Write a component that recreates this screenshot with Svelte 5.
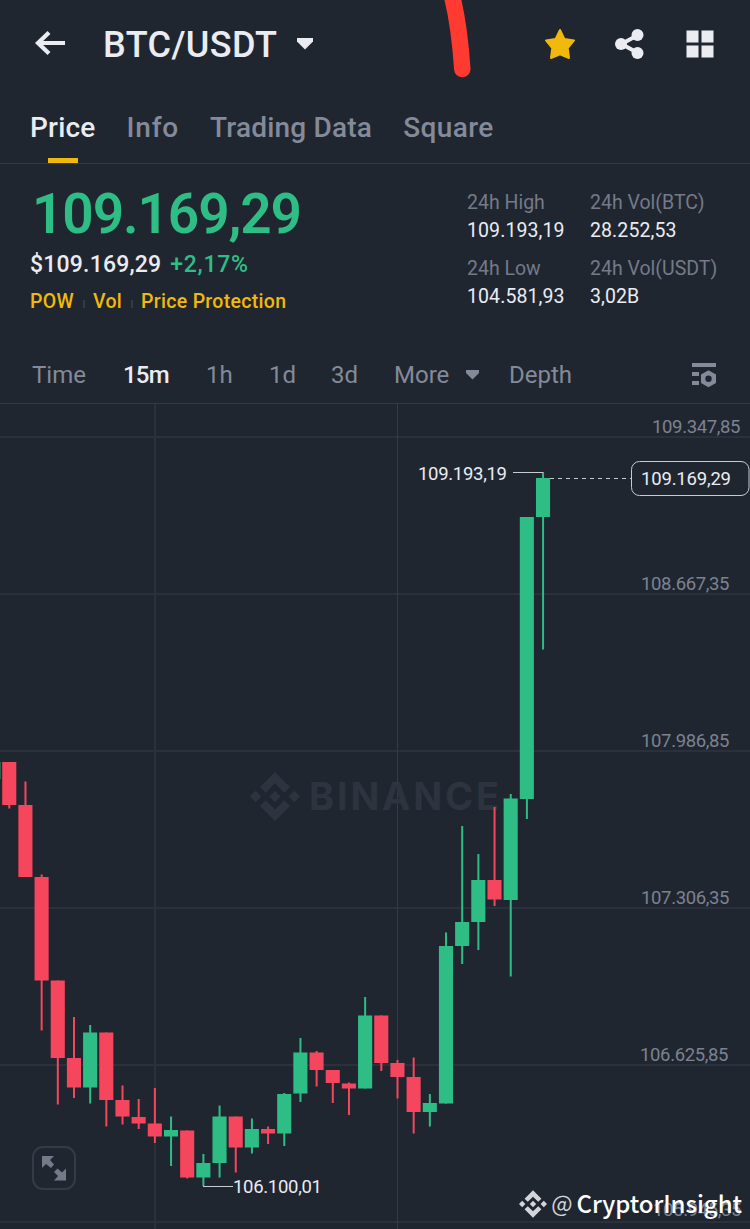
<script lang="ts">
    interface Candle {
        up: boolean;
        top: number;
        bottom: number;
        high: number;
        low: number;
    }

    const tabs = ['Price', 'Info', 'Trading Data', 'Square'];
    const tags = ['POW', 'Vol', 'Price Protection'];
    const stats = [
        {label: '24h High', value: '109.193,19'},
        {label: '24h Vol(BTC)', value: '28.252,53'},
        {label: '24h Low', value: '104.581,93'},
        {label: '24h Vol(USDT)', value: '3,02B'}
    ];

    const gridLines = [33, 190, 347, 504, 661, 818];
    const priceLabels = [
        {text: '109.347,85', x: 652, y: 30},
        {text: '108.667,35', x: 641, y: 187},
        {text: '107.986,85', x: 641, y: 344},
        {text: '107.306,35', x: 641, y: 501},
        {text: '106.625,85', x: 640, y: 658},
        {text: '105.945,35', x: 653, y: 813}
    ];

    const step = 16.175;
    // direction, body top, body bottom, wick top, wick bottom
    const rows: [string, number, number, number, number][] = [
        ['r', 762, 805, 762, 808.5],
        ['r', 805, 877, 781.5, 877],
        ['r', 877, 980.5, 874.5, 1030.5],
        ['r', 980.5, 1058, 980.5, 1104.5],
        ['r', 1058, 1087.5, 1017, 1098],
        ['g', 1032.5, 1087.5, 1025, 1103.5],
        ['r', 1032.5, 1100, 1032.5, 1126.5],
        ['r', 1100, 1116.5, 1085.5, 1124.5],
        ['r', 1117, 1123.5, 1099, 1129],
        ['r', 1123.5, 1136.5, 1088, 1143],
        ['g', 1130, 1136.5, 1116.5, 1166],
        ['r', 1130.5, 1177.5, 1130.5, 1178.5],
        ['g', 1163, 1177.5, 1154, 1186],
        ['g', 1116.5, 1163, 1105.5, 1177.5],
        ['r', 1116.5, 1147.5, 1116.5, 1172.5],
        ['g', 1129, 1147.5, 1118.5, 1153.5],
        ['r', 1129, 1133.5, 1126.5, 1144],
        ['g', 1094, 1133.5, 1093, 1146],
        ['g', 1052.5, 1093.5, 1038, 1102],
        ['r', 1052.5, 1070, 1051, 1086.5],
        ['r', 1070, 1083, 1070, 1103],
        ['r', 1083.5, 1088.5, 1082.5, 1115],
        ['g', 1015.5, 1088.5, 997, 1088.5],
        ['r', 1015.5, 1063, 1015.5, 1071],
        ['r', 1063, 1077, 1060, 1098.5],
        ['r', 1077, 1112, 1057.5, 1133.5],
        ['g', 1103, 1112, 1094, 1126.5],
        ['g', 946, 1103.5, 932.5, 1103.5],
        ['g', 922, 946, 826, 964],
        ['g', 880, 922, 854, 950],
        ['r', 880, 899.5, 807, 906],
        ['g', 798.5, 900, 794, 976.5],
        ['g', 517, 799, 517, 819],
        ['g', 478, 517, 472, 649.5]
    ];
    const candles: Candle[] = rows.map(([dir, top, bottom, high, low]) => ({up: dir === 'g', top, bottom, high, low}));
</script>

{#snippet logo()}
    <path d="M0-24.5 15-9.5 9.3-3.8 0-13-9.3-3.8-15-9.5Z"/>
    <path d="M0 24.5 15 9.5 9.3 3.8 0 13-9.3 3.8-15 9.5Z"/>
    <path d="M0-5.7 5.7 0 0 5.7-5.7 0ZM-19.3-5.7-13.6 0-19.3 5.7-25 0ZM19.3-5.7 25 0 19.3 5.7 13.6 0Z"/>
{/snippet}

<div class="screen">
    <header>
        <svg class="back" width="32" height="26" viewBox="0 0 32 26">
            <path d="M31 13H4M15 2.5 4 13 15 23.5" fill="none" stroke="currentColor" stroke-width="4.2"/>
        </svg>
        <h1>BTC/USDT</h1>
        <svg class="caret" width="16" height="12" viewBox="0 0 16 12">
            <path d="M0 0H16V3.5L8 11.5 0 3.5Z" fill="currentColor"/>
        </svg>
        <div class="actions">
            <svg width="32" height="32" viewBox="0 0 32 32">
                <path d="M16 2 20.3 10.9 30 12.4 23.7 20 25 30 16 26.4 7 30 8.3 20 2 12.4 11.7 10.9Z"
                      fill="#f0b90b" stroke="#f0b90b" stroke-width="2" stroke-linejoin="round"/>
            </svg>
            <svg width="32" height="32" viewBox="0 0 32 32">
                <path d="M24 7 7.5 16 24 25" fill="none" stroke="currentColor" stroke-width="4"/>
                <g fill="currentColor">
                    <circle cx="7" cy="16" r="6"/>
                    <circle cx="23.5" cy="7" r="6"/>
                    <circle cx="23.5" cy="25" r="6"/>
                </g>
            </svg>
            <svg width="32" height="32" viewBox="0 0 32 32">
                <path d="M2.5 2.5H14.5V14.5H2.5ZM17.5 2.5H29.5V14.5H17.5ZM2.5 17.5H14.5V29.5H2.5ZM17.5 17.5H29.5V29.5H17.5Z"
                      fill="currentColor"/>
            </svg>
        </div>
    </header>

    <nav class="tabs">
        {#each tabs as tab, i}
            <span class="tab" class:active={i === 0}>{tab}</span>
        {/each}
    </nav>

    <section class="summary">
        <div class="quote">
            <div class="last">109.169,29</div>
            <div class="fiat">$109.169,29 <span>+2,17%</span></div>
            <div class="tags">
                {#each tags as tag}
                    <span>{tag}</span>
                {/each}
            </div>
        </div>
        <dl class="stats">
            {#each stats as stat}
                <div>
                    <dt>{stat.label}</dt>
                    <dd>{stat.value}</dd>
                </div>
            {/each}
        </dl>
    </section>

    <nav class="intervals">
        <span>Time</span>
        <span class="active">15m</span>
        <span>1h</span>
        <span>1d</span>
        <span>3d</span>
        <span>More</span>
        <svg width="13" height="10" viewBox="0 0 13 10">
            <path d="M0 0H13V3L6.5 9.5 0 3Z" fill="currentColor"/>
        </svg>
        <span>Depth</span>
        <svg width="26" height="26" viewBox="0 0 26 26">
            <path d="M1 1H25V5H1ZM1 10H8V14H1ZM1 19H8V23H1Z" fill="currentColor"/>
            <path d="M17.5 8.2 25 12.5V21L17.5 25.2 10 21V12.5ZM17.5 13.5A3.2 3.2 0 1 0 17.5 19.9 3.2 3.2 0 1 0 17.5 13.5Z"
                  fill="currentColor" fill-rule="evenodd"/>
        </svg>
    </nav>

    <div class="chart">
        <svg width="750" height="825" viewBox="0 0 750 825">
            <g class="grid">
                {#each gridLines as y}
                    <path d="M0 {y}H750" stroke-width="2"/>
                {/each}
                <path d="M155 0V825" stroke-width="2"/>
                <path class="bright" d="M397.5 0V825"/>
            </g>

            <g class="watermark">
                <g transform="translate(275 392.5)">{@render logo()}</g>
                <text x="309" y="406" textLength="190">BINANCE</text>
            </g>

            <g transform="translate(0 -404)">
                <rect class="up" x="0" y="762" width="1" height="17" opacity="0.4"/>
                {#each candles as c, i}
                    <g class={c.up ? 'up' : 'down'}>
                        <rect x={8.3 + i * step} y={c.high} width="2" height={c.low - c.high}/>
                        <rect x={2.2 + i * step} y={c.top} width="14.1" height={c.bottom - c.top}/>
                    </g>
                {/each}
            </g>

            <g class="axis">
                {#each priceLabels as label}
                    <text x={label.x} y={label.y - 1} textLength="88.5">{label.text}</text>
                {/each}
            </g>

            <g class="marks">
                <path d="M513 68.5H543M203 782.5H233"/>
                <path d="M550 74.5H631" stroke-dasharray="4 4"/>
                <rect x="631.5" y="57.5" width="117.5" height="34" rx="8"/>
                <text x="418" y="76" textLength="89">109.193,19</text>
                <text x="641" y="81" textLength="90">109.169,29</text>
                <text x="233" y="789" textLength="89">106.100,01</text>
            </g>

            <g class="expand">
                <rect x="33" y="743" width="42" height="42" rx="10"/>
                <path d="M42 752H54L50 756 54 760.5 51 764 46 760 42 764ZM66 776.5H54L58 772 54 768 57.5 764.5 62 768.5 66 764.5Z"/>
            </g>
        </svg>
        <div class="credit">
            <svg width="28" height="28" viewBox="-25 -25 50 50" fill="currentColor">{@render logo()}</svg>
            <span class="at">@</span>
            <span class="author">CryptorInsight</span>
        </div>
    </div>

    <svg class="stroke" width="40" height="80" viewBox="0 0 40 80">
        <path d="M12-4C18 20 20.5 42 22.3 69" fill="none" stroke="#ff3a30" stroke-width="16.5" stroke-linecap="round"/>
    </svg>
</div>

<style>
    :global(body) {
        margin: 0;
        background: #202630;
    }

    .screen {
        position: relative;
        width: 750px;
        height: 1229px;
        overflow: hidden;
        background: #202630;
        color: #eaecf2;
        font-family: Roboto, "Liberation Sans", sans-serif;
    }

    svg {
        display: block;
        flex: none;
    }

    header {
        display: flex;
        align-items: center;
        height: 88px;
        padding: 0 34px;
    }

    .back {
        margin-top: -2px;
    }

    h1 {
        width: 176px;
        margin: 2px 0 0 37px;
        font-size: 36px;
        font-weight: 500;
        letter-spacing: 0.4px;
        line-height: 44px;
    }

    .caret {
        margin: -1px 0 0 18px;
    }

    .actions {
        display: flex;
        gap: 38px;
        margin-left: auto;
    }

    .tabs {
        display: flex;
        gap: 31px;
        height: 75px;
        padding-left: 30px;
        border-bottom: 1px solid #343b47;
        color: #848a99;
        font-size: 28px;
        font-weight: 500;
    }

    .tab {
        display: flex;
        flex-direction: column;
        align-items: center;
        justify-content: space-between;
        padding-top: 23px;
        letter-spacing: 0.2px;
        line-height: 34px;
        white-space: nowrap;
    }

    .tab:nth-child(2) {
        letter-spacing: 0.8px;
    }

    .tab:last-child {
        letter-spacing: 0.4px;
    }

    .tab.active {
        color: #eaecf2;
    }

    .tab.active::after {
        content: '';
        width: 30px;
        height: 5px;
        background: #f0b90b;
    }

    .summary {
        display: flex;
        height: 182px;
    }

    .quote {
        width: 467px;
        padding-left: 30px;
        box-sizing: border-box;
    }

    .last {
        margin: 18px 0 1px 2px;
        color: #2ebd85;
        font-size: 55px;
        font-weight: 600;
        letter-spacing: -1.1px;
        line-height: 64px;
    }

    .fiat {
        margin-top: 4px;
        font-size: 23px;
        font-weight: 500;
        letter-spacing: 0.2px;
        line-height: 30px;
        word-spacing: 3px;
    }

    .fiat span {
        color: #2ebd85;
        letter-spacing: 0.7px;
    }

    .tags {
        display: flex;
        margin-top: 10px;
        color: #f0b90b;
        font-size: 19.5px;
        font-weight: 500;
        letter-spacing: 0.3px;
        line-height: 24px;
    }

    .tags span + span::before {
        content: '';
        display: inline-block;
        width: 2px;
        height: 8px;
        margin: 0 8px 0 9px;
        background: #343b47;
    }

    .stats {
        display: grid;
        grid-template-columns: 123px 160px;
        grid-auto-rows: 66px;
        margin: 25px 0 0;
    }

    dt,
    dd {
        margin: 0;
        font-size: 19.5px;
        line-height: 28px;
        white-space: nowrap;
    }

    dt {
        color: #747a88;
    }

    dd {
        letter-spacing: 0.1px;
    }

    .intervals {
        display: grid;
        grid-template-columns: 91px 83px 63px 62px 63px 72px 43px 182px 26px;
        align-items: center;
        height: 57px;
        padding-left: 32px;
        border-bottom: 1px solid #343b47;
        color: #848a99;
        font-size: 24px;
    }

    .intervals .active {
        color: #eaecf2;
        font-weight: 500;
        letter-spacing: -0.8px;
    }

    .chart {
        position: relative;
        height: 825px;
    }

    .grid path {
        stroke: #2a303c;
    }

    .grid .bright {
        stroke: #353b47;
    }

    .watermark {
        fill: #2d333f;
        font-family: Inter, sans-serif;
        font-size: 38px;
        font-weight: 700;
    }

    .up {
        fill: #2ebd85;
    }

    .down {
        fill: #f6465d;
    }

    .axis {
        fill: #7c8290;
        font-size: 18.5px;
    }

    .marks path,
    .marks rect {
        fill: none;
        stroke: #c8cad2;
    }

    .marks text {
        fill: #eaecf2;
        font-size: 18.5px;
    }

    .expand rect {
        fill: none;
        stroke: #343b47;
        stroke-width: 2;
    }

    .expand path {
        fill: #747a88;
    }

    /* author credit sits over the lower right corner of the chart */
    .credit {
        position: absolute;
        right: 8px;
        bottom: 8px;
        display: flex;
        align-items: center;
        color: #d3d5dc;
        font-family: "Noto Sans CJK SC", sans-serif;
        font-size: 24px;
        line-height: 36px;
    }

    .at {
        margin: -5px 4px 0 4px;
        font-size: 22.5px;
    }

    .author {
        margin-top: -2px;
        color: #fff;
        font-weight: 500;
        letter-spacing: -0.05px;
    }

    /* hand-drawn marker over the header */
    .stroke {
        position: absolute;
        top: 0;
        left: 440px;
    }
</style>
